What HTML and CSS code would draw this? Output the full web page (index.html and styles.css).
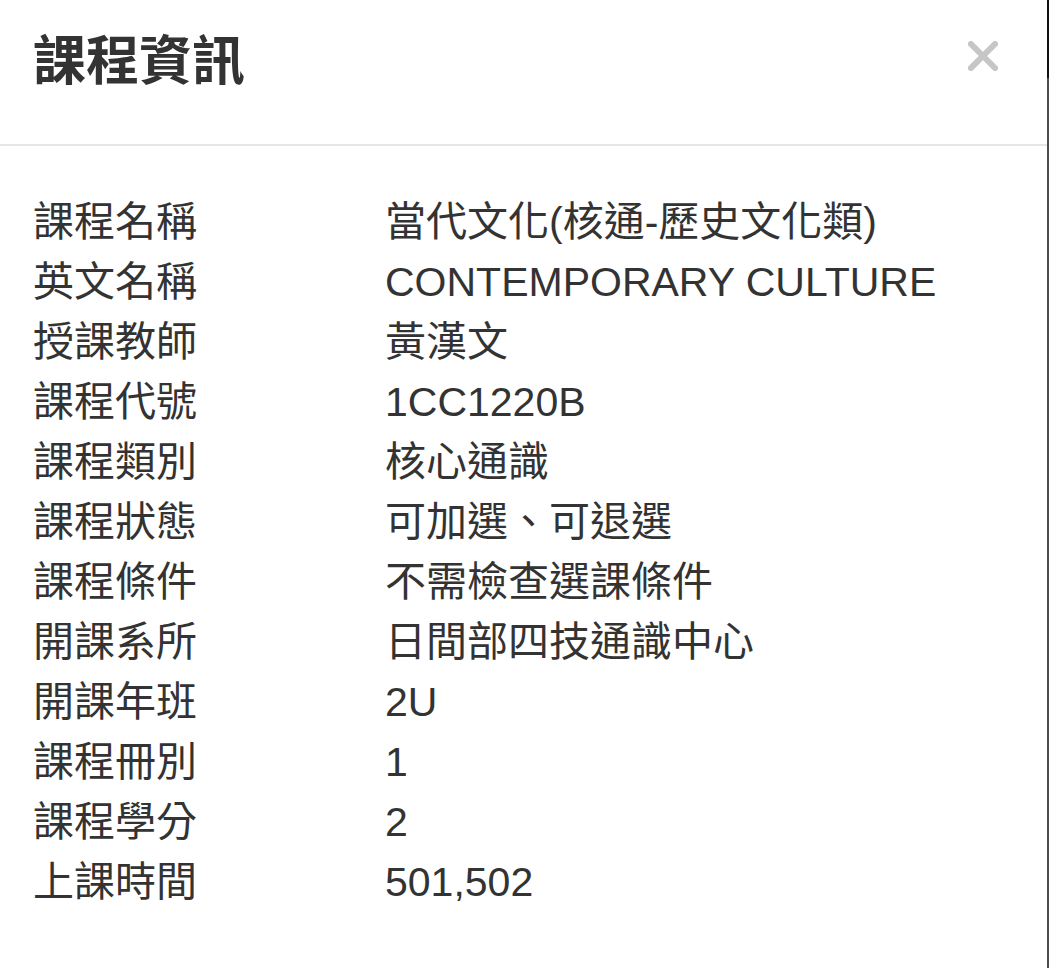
FILE: index.html
```html
<!DOCTYPE html>
<html lang="zh-Hant">
<head>
<meta charset="utf-8">
<title>課程資訊</title>
<link rel="stylesheet" href="styles.css">
</head>
<body>
<div class="page">
  <div class="modal">
    <div class="modal-header">
      <h4 class="modal-title">課程資訊</h4>
      <button class="close" type="button" aria-label="Close">
        <svg width="30" height="30" viewBox="0 0 30 30"><path d="M3 3 L27 27 M27 3 L3 27" stroke="#c6c6c6" stroke-width="6" stroke-linecap="square"/></svg>
      </button>
    </div>
    <div class="modal-body">
      <dl class="info">
        <div class="row"><dt>課程名稱</dt><dd>當代文化(核通-歷史文化類)</dd></div>
        <div class="row"><dt>英文名稱</dt><dd>CONTEMPORARY CULTURE</dd></div>
        <div class="row"><dt>授課教師</dt><dd>黃漢文</dd></div>
        <div class="row"><dt>課程代號</dt><dd>1CC1220B</dd></div>
        <div class="row"><dt>課程類別</dt><dd>核心通識</dd></div>
        <div class="row"><dt>課程狀態</dt><dd>可加選、可退選</dd></div>
        <div class="row"><dt>課程條件</dt><dd>不需檢查選課條件</dd></div>
        <div class="row"><dt>開課系所</dt><dd>日間部四技通識中心</dd></div>
        <div class="row"><dt>開課年班</dt><dd>2U</dd></div>
        <div class="row"><dt>課程冊別</dt><dd>1</dd></div>
        <div class="row"><dt>課程學分</dt><dd>2</dd></div>
        <div class="row"><dt>上課時間</dt><dd>501,502</dd></div>
      </dl>
    </div>
  </div>
  <div class="edge">
    <div class="edge-top"></div>
    <div class="edge-bottom"></div>
  </div>
</div>
</body>
</html>
```

FILE: styles.css
```css
html, body {
  margin: 0;
  padding: 0;
  background: #ffffff;
}

body {
  font-family: "Liberation Sans", "Noto Sans CJK TC", sans-serif;
  color: #333333;
}

.page {
  display: flex;
  width: 1049px;
  height: 968px;
  overflow: hidden;
}

.modal {
  flex: 1;
  background: #ffffff;
  display: flex;
  flex-direction: column;
}

.modal-header {
  height: 144px;
  border-bottom: 2px solid #e5e5e5;
  display: flex;
  align-items: flex-start;
  justify-content: space-between;
  padding: 0 49px 0 33px;
  box-sizing: content-box;
}

.modal-title {
  margin: 0;
  padding-top: 33px;
  font-size: 53px;
  line-height: 58px;
  font-weight: 700;
  color: #333333;
}

.close {
  margin-top: 41px;
  padding: 0;
  border: 0;
  background: transparent;
  width: 30px;
  height: 30px;
  display: block;
}

.close svg {
  display: block;
}

.modal-body {
  padding: 46px 33px 0 33px;
}

.info {
  margin: 0;
}

.row {
  display: flex;
  height: 60px;
  align-items: center;
  font-size: 41px;
  line-height: 60px;
}

.row dt {
  width: 352px;
  flex: none;
  margin: 0;
}

.row dd {
  margin: 0;
}

.edge {
  width: 2px;
  flex: none;
  display: flex;
  flex-direction: column;
}

.edge-top {
  height: 78px;
  background: #111111;
}

.edge-bottom {
  flex: 1;
  background: #4a4a4a;
}
```
